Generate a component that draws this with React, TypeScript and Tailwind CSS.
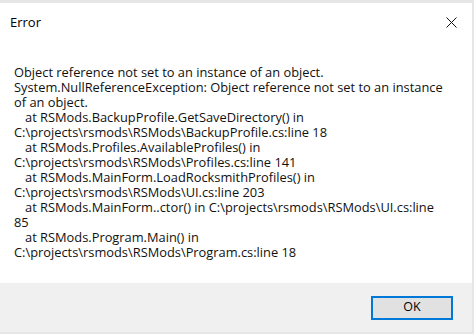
import React from 'react';

const lines: { text: string; indent?: boolean }[] = [
  { text: 'Object reference not set to an instance of an object.' },
  { text: 'System.NullReferenceException: Object reference not set to an instance' },
  { text: 'of an object.' },
  { text: 'at RSMods.BackupProfile.GetSaveDirectory() in', indent: true },
  { text: 'C:\\projects\\rsmods\\RSMods\\BackupProfile.cs:line 18' },
  { text: 'at RSMods.Profiles.AvailableProfiles() in', indent: true },
  { text: 'C:\\projects\\rsmods\\RSMods\\Profiles.cs:line 141' },
  { text: 'at RSMods.MainForm.LoadRocksmithProfiles() in', indent: true },
  { text: 'C:\\projects\\rsmods\\RSMods\\UI.cs:line 203' },
  { text: 'at RSMods.MainForm..ctor() in C:\\projects\\rsmods\\RSMods\\UI.cs:line', indent: true },
  { text: '85' },
  { text: 'at RSMods.Program.Main() in', indent: true },
  { text: 'C:\\projects\\rsmods\\RSMods\\Program.cs:line 18' },
];

const ErrorDialog: React.FC = () => {
  return (
    <div className="w-[474px] h-[334px] bg-[#e6e6e6] pt-[3px] pr-[2px] pb-[2px] flex flex-col font-['Open_Sans',sans-serif] text-black">
      <div className="flex-1 flex flex-col bg-white">
        {/* title bar */}
        <div className="h-[38px] flex items-center justify-between pl-[10px] pr-[14px]">
          <span className="text-[13px] leading-none">Error</span>
          <svg width="11" height="11" viewBox="0 0 11 11" className="mr-[1px]">
            <path d="M0.5 0.5 L10.5 10.5 M10.5 0.5 L0.5 10.5" stroke="#111" strokeWidth="1" />
          </svg>
        </div>

        {/* message */}
        <div className="flex-1 pl-[14px] pt-[24px] text-[12.85px] leading-[15px] text-[#111]">
          {lines.map((l, i) => (
            <div key={i} className={`whitespace-nowrap ${l.indent ? 'pl-[11px]' : ''}`}>
              {l.text}
            </div>
          ))}
        </div>

        {/* footer */}
        <div className="h-[49px] bg-[#f0f0f0] flex items-center justify-end pr-[19px]">
          <button className="w-[82px] h-[24px] border-2 border-[#0078d7] bg-[#e1e1e1] text-[12.5px] leading-none">
            OK
          </button>
        </div>
      </div>
    </div>
  );
};

export default function App() {
  return <ErrorDialog />;
}
